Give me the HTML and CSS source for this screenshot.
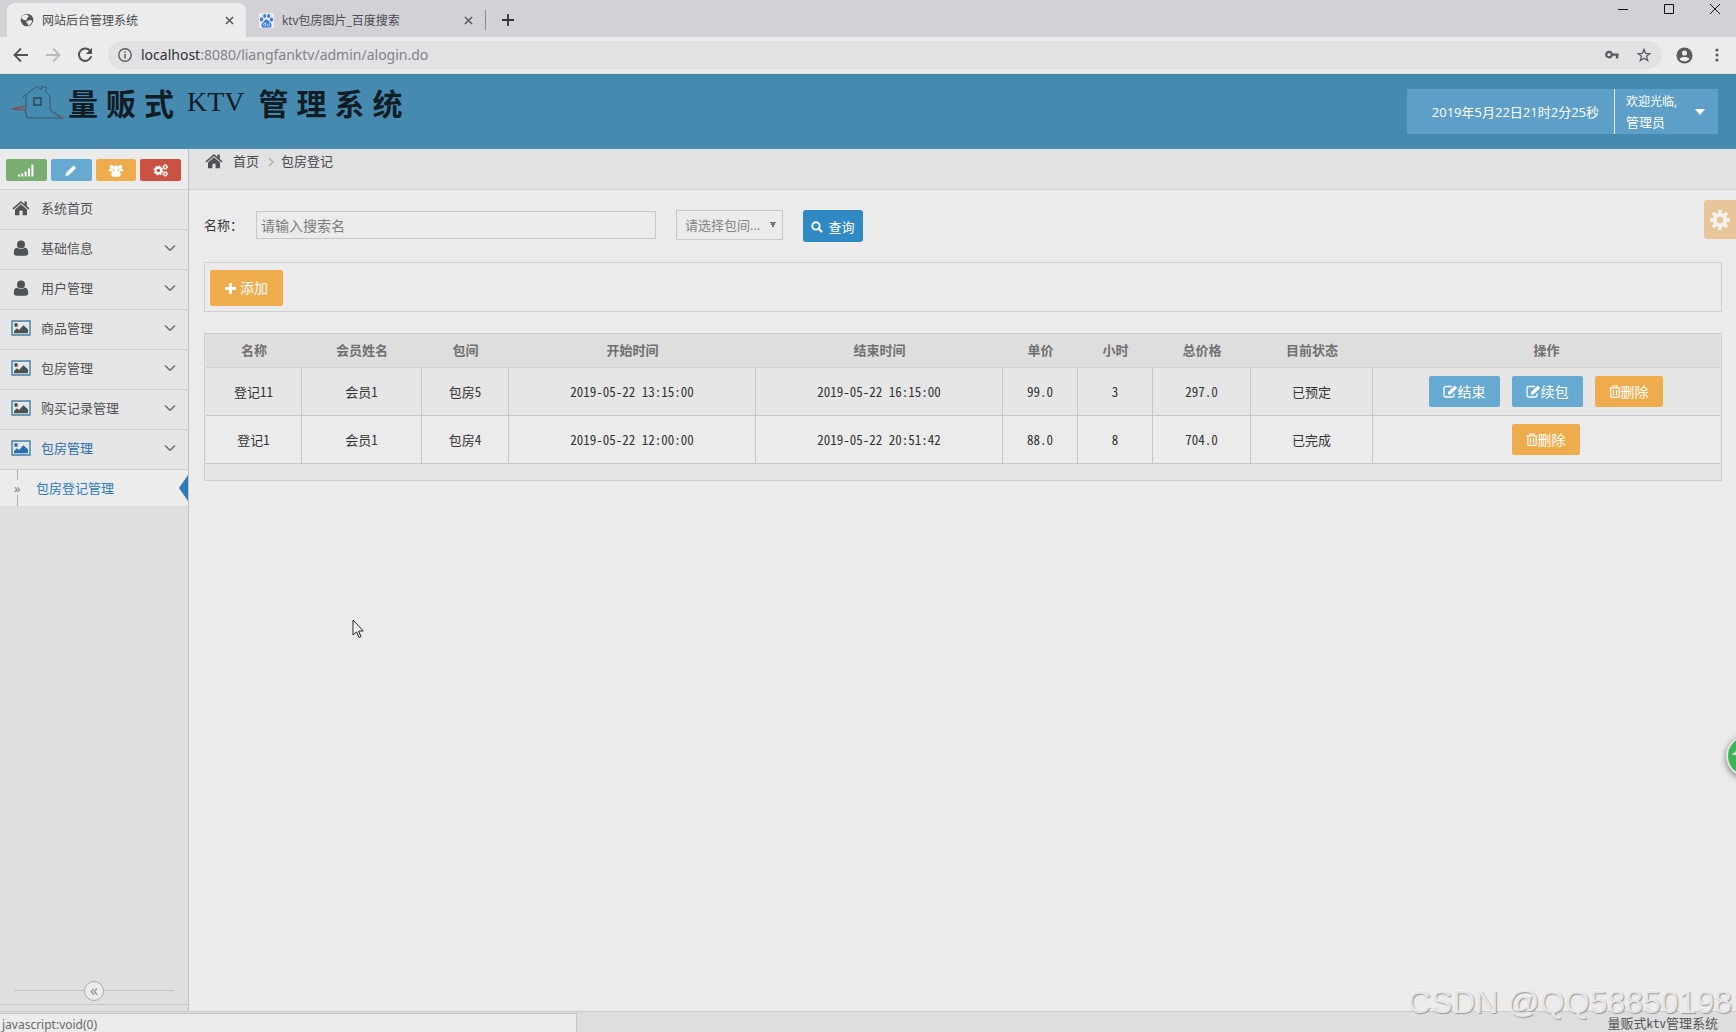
FILE: index.html
```html
<!DOCTYPE html>
<html lang="zh-CN">
<head>
<meta charset="utf-8">
<title>网站后台管理系统</title>
<link rel="stylesheet" href="styles.css">
</head>
<body>
<svg class="defs" aria-hidden="true">
  <symbol id="i-home" viewBox="0 0 18 16"><path d="M9 1 0.5 8.3 1.6 9.4 9 3.1 16.4 9.4 17.5 8.3 14.8 6V1.6H12.4V3.9Z"/><path d="M9 4.3 3 9.4V15.2H7.4V10.8H10.6V15.2H15V9.4Z"/></symbol>
  <symbol id="i-user" viewBox="0 0 16 16"><circle cx="8" cy="4.4" r="4"/><path d="M4.3 7.7C2 7.7 0.8 9.6 0.8 13 0.8 14.8 1.8 15.7 3.4 15.7H12.6C14.2 15.7 15.2 14.8 15.2 13 15.2 9.6 14 7.7 11.7 7.7 9.7 9.6 6.3 9.6 4.3 7.7Z"/></symbol>
  <symbol id="i-pic" viewBox="0 0 20 16"><path class="frame" d="M1 1H19V15H1Z" fill="none" stroke-width="1.4"/><circle cx="5" cy="5" r="1.9"/><path d="M3 13.2V11L6 8.3 8 10 12.5 5.2 17 9.6V13.2Z"/></symbol>
  <symbol id="i-down" viewBox="0 0 12 8"><path d="M1 1.5 6 6.2 11 1.5" fill="none" stroke="currentColor" stroke-width="1.5"/></symbol>
  <symbol id="i-edit" viewBox="0 0 15 13"><path d="M9 1.5H2.5Q1 1.5 1 3V10.5Q1 12 2.5 12H9.5Q11 12 11 10.5V8.5" fill="none" stroke="currentColor" stroke-width="1.3"/><path d="M5 9.6V7.2L11.8.6 14.2 3 7.4 9.6Z"/></symbol>
  <symbol id="i-trash" viewBox="0 0 12 13"><path d="M.5 3H11.5M4 3V1H8V3M1.8 3V11.2Q1.8 12.3 3 12.3H9Q10.2 12.3 10.2 11.2V3M4.5 5V10.5M7.5 5V10.5" fill="none" stroke="currentColor" stroke-width="1.2"/></symbol>
  <symbol id="i-gear" viewBox="0 0 20 20"><circle cx="10" cy="10" r="5.3" fill="none" stroke="currentColor" stroke-width="4"/><path d="M10 0V4M10 16V20M0 10H4M16 10H20M2.9 2.9 5.6 5.6M14.4 14.4 17.1 17.1M2.9 17.1 5.6 14.4M14.4 5.6 17.1 2.9" stroke="currentColor" stroke-width="3.6" fill="none"/></symbol>
  <symbol id="i-close" viewBox="0 0 10 10"><path d="M1 1 9 9M9 1 1 9" stroke="currentColor" stroke-width="1.6" fill="none"/></symbol>
</svg>

<div class="tabs">
  <div class="tab tab-on">
    <svg class="fav" viewBox="0 0 16 16"><circle cx="8" cy="8" r="7.2"/><path d="M7 1.6C8.5 1.8 10 2.6 10 4L8 6 7.5 8.5 4.5 8 1.3 6C2 3.4 4.2 1.6 7 1.6ZM8.8 8.8 12.5 8 14 9.2C13.3 12 11.5 13.8 9.5 14.3L8.3 11.5 6.5 10.5Z" fill="#ececec"/></svg>
    <span class="tab-title">网站后台管理系统</span>
    <button class="plain" aria-label="关闭"><svg class="x"><use href="#i-close"/></svg></button>
  </div>
  <div class="tab">
    <svg class="fav paw" viewBox="0 0 16 16"><rect width="16" height="16" fill="#e6ebf5"/><ellipse cx="2.7" cy="6.8" rx="1.7" ry="2.2"/><ellipse cx="6" cy="3.2" rx="1.6" ry="2.2"/><ellipse cx="10.2" cy="3.2" rx="1.6" ry="2.2"/><ellipse cx="13.3" cy="7" rx="1.7" ry="2.2"/><path d="M8 6.8C6.3 6.8 5.8 8.6 4.2 10 1.8 12 2.3 15.4 5 15.4 6.5 15.4 9.5 15.4 11 15.4 13.8 15.4 14.2 12 11.8 10 10.2 8.6 9.7 6.8 8 6.8Z"/><path d="M6.8 10V13.6H5.6Q4.6 13.4 4.6 12.4T5.6 11.2H6.8M8.6 11V13Q8.6 13.6 9.2 13.6H11V11" fill="none" stroke="#e6ebf5" stroke-width=".8"/></svg>
    <span class="tab-title">ktv包房图片_百度搜索</span>
    <button class="plain" aria-label="关闭"><svg class="x"><use href="#i-close"/></svg></button>
  </div>
  <button class="plain newtab" aria-label="新标签页"><svg viewBox="0 0 12 12"><path d="M6 0V12M0 6H12" stroke="#333" stroke-width="1.8"/></svg></button>
  <div class="winbtns">
    <button class="plain" aria-label="最小化"><svg viewBox="0 0 10 10"><path d="M0 5.5H10" stroke="#111"/></svg></button>
    <button class="plain" aria-label="最大化"><svg viewBox="0 0 10 10"><path d="M.5 .5H9.5V9.5H.5Z" stroke="#111" fill="none"/></svg></button>
    <button class="plain" aria-label="关闭窗口"><svg viewBox="0 0 10 10"><path d="M0 0 10 10M10 0 0 10" stroke="#111"/></svg></button>
  </div>
</div>

<div class="toolbar">
  <button class="plain" aria-label="后退"><svg class="nav" viewBox="0 0 16 16"><path d="M15 8H2M8 1.5 1.5 8 8 14.5" fill="none" stroke="#505256" stroke-width="1.8"/></svg></button>
  <button class="plain" aria-label="前进"><svg class="nav" viewBox="0 0 16 16"><path d="M1 8H14M8 1.5 14.5 8 8 14.5" fill="none" stroke="#b9babc" stroke-width="1.8"/></svg></button>
  <button class="plain" aria-label="刷新"><svg class="nav" viewBox="0 0 16 16"><path d="M13.5 4.5A6.2 6.2 0 1 0 14.2 9.2" fill="none" stroke="#505256" stroke-width="2"/><path d="M15 .8V7H8.8Z" fill="#505256"/></svg></button>
  <div class="address">
    <svg class="info" viewBox="0 0 14 14"><circle cx="7" cy="7" r="6.2" fill="none" stroke="#5c5e61" stroke-width="1.4"/><path d="M7 6V10.5M7 3.5V5" stroke="#5c5e61" stroke-width="1.5"/></svg>
    <span class="url"><b>localhost</b>:8080/liangfanktv/admin/alogin.do</span>
    <svg class="key" viewBox="0 0 14 10"><circle cx="4" cy="4.6" r="2.8" fill="none" stroke="#5a5c60" stroke-width="2.2"/><path d="M7 4.6H13.6M12 4.6V8.5" stroke="#5a5c60" stroke-width="2.4" fill="none"/></svg>
    <svg class="star" viewBox="0 0 14 14"><path d="M7 1.4 8.6 5.4 12.9 5.6 9.5 8.3 10.7 12.6 7 10.2 3.3 12.6 4.5 8.3 1.1 5.6 5.4 5.4Z" fill="none" stroke="#5a5c60" stroke-width="1.3"/></svg>
  </div>
  <svg class="acct" viewBox="0 0 18 18"><circle cx="9" cy="9" r="8.5" fill="#5a5c60"/><circle cx="9" cy="6.3" r="2.7" fill="#ececec"/><path d="M3.8 12.6C5.5 9.8 12.5 9.8 14.2 12.6 12 16 6 16 3.8 12.6Z" fill="#ececec"/></svg>
  <svg class="dots" viewBox="0 0 4 14"><circle cx="2" cy="2" r="1.6"/><circle cx="2" cy="7" r="1.6"/><circle cx="2" cy="12" r="1.6"/></svg>
</div>

<header class="banner">
  <h1 class="logo">
    <svg class="house" viewBox="0 0 52 38"><g fill="none"><path d="M11 14 25 3 29 7 30 3 35 5 33 8 39 14M14 12V26M38 13V27L50 35H15L13 27" stroke="#33566f" stroke-width="1"/><path d="M0 26 14 23M1 26 14 27M44 31 51 36" stroke="#7b4f55" stroke-width="1.3"/><path d="M22 15H29V22H22Z" stroke="#2a4658" stroke-width="1.4"/></g></svg>
    <span class="cn"><span>量</span><span>贩</span><span>式</span></span><span class="en">KTV</span><span class="cn"><span>管</span><span>理</span><span>系</span><span>统</span></span>
  </h1>
  <div class="userbox">
    <time class="clock">2019年5月22日21时2分25秒</time>
    <button class="plain who"><span><small>欢迎光临,</small><br>管理员</span><svg viewBox="0 0 10 6"><path d="M0 0H10L5 6Z" fill="#fff"/></svg></button>
  </div>
</header>

<div class="body">
  <aside class="side">
    <div class="shortcuts">
      <button class="plain green" aria-label="统计"><svg viewBox="0 0 16 12"><path d="M0 10H2V12H0ZM3.3 9H5.3V12H3.3ZM6.6 7H8.6V12H6.6ZM10 4H12V12H10ZM13.4 0H15.4V12H13.4Z"/></svg></button>
      <button class="plain blue" aria-label="编辑"><svg viewBox="0 0 14 14"><path d="M1 13 1.8 9.5 9.8 1.5 12.6 4.2 4.6 12.2Z"/></svg></button>
      <button class="plain amber" aria-label="用户"><svg viewBox="0 0 17 15"><circle cx="3.5" cy="3" r="2.2"/><circle cx="13.5" cy="3" r="2.2"/><circle cx="8.5" cy="5" r="3.2"/><path d="M0 8.5Q0 5.5 2 5.2H5V8.5ZM17 8.5Q17 5.5 15 5.2H12V8.5ZM3 12.5Q3 8 5.5 8H11.5Q14 8 14 12.5 14 14.6 12 14.6H5Q3 14.6 3 12.5Z"/></svg></button>
      <button class="plain red" aria-label="设置"><svg viewBox="0 0 17 15"><g fill="none" stroke="#fff"><circle cx="5.5" cy="7.5" r="3.3" stroke-width="2.4"/><circle cx="5.5" cy="7.5" r="5" stroke-width="1.4" stroke-dasharray="2 1.9"/><circle cx="13.4" cy="3.4" r="1.8" stroke-width="1.4"/><circle cx="13.4" cy="3.4" r="2.8" stroke-dasharray="1.2 1"/><circle cx="13.4" cy="11.4" r="1.8" stroke-width="1.4"/><circle cx="13.4" cy="11.4" r="2.8" stroke-dasharray="1.2 1"/></g></svg></button>
    </div>
    <nav class="menu">
      <a href="#"><svg class="ic"><use href="#i-home"/></svg><span>系统首页</span></a>
      <a href="#"><svg class="ic"><use href="#i-user"/></svg><span>基础信息</span><svg class="ar"><use href="#i-down"/></svg></a>
      <a href="#"><svg class="ic"><use href="#i-user"/></svg><span>用户管理</span><svg class="ar"><use href="#i-down"/></svg></a>
      <a href="#"><svg class="ic"><use href="#i-pic"/></svg><span>商品管理</span><svg class="ar"><use href="#i-down"/></svg></a>
      <a href="#"><svg class="ic"><use href="#i-pic"/></svg><span>包房管理</span><svg class="ar"><use href="#i-down"/></svg></a>
      <a href="#"><svg class="ic"><use href="#i-pic"/></svg><span>购买记录管理</span><svg class="ar"><use href="#i-down"/></svg></a>
      <a href="#" class="open"><svg class="ic"><use href="#i-pic"/></svg><span>包房管理</span><svg class="ar"><use href="#i-down"/></svg></a>
      <a href="#" class="sub"><span class="mark">»</span><span>包房登记管理</span></a>
    </nav>
    <div class="collapse"><button class="plain" aria-label="收起菜单">«</button></div>
  </aside>

  <main class="main">
    <nav class="crumbs">
      <svg class="home"><use href="#i-home"/></svg><a href="#">首页</a>
      <svg class="sep" viewBox="0 0 6 10"><path d="M1 1 5 5 1 9" fill="none" stroke="#b0b2b8" stroke-width="1.5"/></svg><span>包房登记</span>
    </nav>
    <div class="content">
      <form class="search">
        <label for="q">名称：</label>
        <input id="q" type="text" placeholder="请输入搜索名">
        <select aria-label="包间"><option>请选择包间...</option></select>
        <button type="button" class="plain query"><svg viewBox="0 0 13 13"><circle cx="5.4" cy="5.4" r="4" fill="none" stroke="#fff" stroke-width="2"/><path d="M8.3 8.3 12 12" stroke="#fff" stroke-width="2.4"/></svg>查询</button>
      </form>
      <div class="addbar"><button class="plain add"><svg viewBox="0 0 11 11"><path d="M5.5 0V11M0 5.5H11" stroke="#fff" stroke-width="3"/></svg>添加</button></div>
      <div class="panel">
        <table>
          <colgroup><col class="c1"><col class="c2"><col class="c3"><col class="c4"><col class="c5"><col class="c6"><col class="c7"><col class="c8"><col class="c9"><col></colgroup>
          <thead><tr><th>名称</th><th>会员姓名</th><th>包间</th><th>开始时间</th><th>结束时间</th><th>单价</th><th>小时</th><th>总价格</th><th>目前状态</th><th>操作</th></tr></thead>
          <tbody>
            <tr><td>登记11</td><td>会员1</td><td>包房5</td><td>2019-05-22 13:15:00</td><td>2019-05-22 16:15:00</td><td>99.0</td><td>3</td><td>297.0</td><td>已预定</td>
              <td><div class="ops"><button class="plain blue"><svg class="ed"><use href="#i-edit"/></svg>结束</button><button class="plain blue"><svg class="ed"><use href="#i-edit"/></svg>续包</button><button class="plain amber"><svg class="tr"><use href="#i-trash"/></svg>删除</button></div></td></tr>
            <tr><td>登记1</td><td>会员1</td><td>包房4</td><td>2019-05-22 12:00:00</td><td>2019-05-22 20:51:42</td><td>88.0</td><td>8</td><td>704.0</td><td>已完成</td>
              <td><div class="ops"><button class="plain amber"><svg class="tr"><use href="#i-trash"/></svg>删除</button></div></td></tr>
          </tbody>
        </table>
      </div>
    </div>
  </main>
</div>

<footer class="foot"><span>量贩式ktv管理系统</span></footer>

<div class="status">javascript:void(0)</div>
<button class="plain settings" aria-label="页面设置"><svg><use href="#i-gear"/></svg></button>
<div class="ball"><svg viewBox="0 0 12 12"><path d="M6 0 12 6H8V12H4V6H0Z" fill="#d9f7df"/></svg></div>
<div class="mark-csdn">CSDN @QQ58850198</div>
<svg class="cursor" viewBox="0 0 12 20"><path d="M1 1V16L4.5 12.8 7 18.5 9 17.6 6.6 12H11.3Z" fill="#f4f4f4" stroke="#222" stroke-width="1"/></svg>
</body>
</html>
```
FILE: styles.css
```css
* { box-sizing: border-box; }
body {
  margin: 0; min-height: 100vh; display: flex; flex-direction: column;
  background: #ebebeb; color: #393939; overflow: hidden; position: relative;
  font: 13px/20px "Open Sans", "Noto Sans CJK SC", sans-serif;
}
svg { display: block; flex: none; fill: currentColor; }
.defs { position: absolute; width: 0; height: 0; }
a { color: inherit; text-decoration: none; }
.plain { border: 0; padding: 0; margin: 0; background: none; color: inherit; font: inherit; display: flex; align-items: center; justify-content: center; }

/* browser chrome */
.tabs { height: 37px; background: #d1d1d6; display: flex; align-items: flex-end; padding-left: 7px; }
.tab { width: 239px; height: 34px; display: flex; align-items: center; padding: 0 12px 0 13px; color: #4a4b4f; font-size: 12px; }
.tab-on { background: #ececec; border-radius: 8px 8px 0 0; }
.fav { width: 14px; height: 14px; margin-right: 8px; color: #555; }
.paw { color: #3c78d8; width: 15px; height: 15px; }
.tab-title { flex: 1; padding-top: 2px; }
.x { width: 9px; height: 9px; color: #55565a; }
.newtab { height: 20px; border-left: 1px solid #8a8a90; margin-bottom: 7px; padding-left: 16px; }
.newtab svg { width: 12px; height: 12px; }
.winbtns { margin-left: auto; align-self: flex-start; display: flex; gap: 36px; padding: 4px 16px 0 0; }
.winbtns svg { width: 10px; height: 10px; }

.toolbar { height: 37px; background: #ececec; display: flex; align-items: center; padding: 0 17px 0 13px; gap: 16px; border-bottom: 1px solid #dedede; }
.nav { width: 16px; height: 16px; }
.address { flex: 1; height: 28px; border-radius: 14px; background: #e1e2e4; margin-left: -1px; padding: 0 11px 0 10px; display: flex; align-items: center; }
.info { width: 14px; height: 14px; }
.url { font: 14px/20px "Noto Sans", sans-serif; margin-left: 9px; flex: 1; color: #818386; }
.url b { font-weight: 400; color: #303134; }
.key { width: 14px; height: 10px; margin-right: 18px; }
.star { width: 14px; height: 14px; }
.acct { width: 17px; height: 17px; margin: 0 6px 0 -2px; }
.dots { width: 4px; height: 14px; color: #5a5c60; }

/* page header */
.banner { min-height: 75px; background: #478aaf; display: flex; justify-content: space-between; align-items: flex-start; padding: 0 18px 0 12px; }
.logo { margin: 0; padding-top: 6px; display: flex; align-items: center; color: #101c26; font-weight: 400; line-height: 44px; }
.house { width: 52px; height: 38px; margin-right: 4px; }
.cn { display: flex; gap: 8px; font: 700 30px/44px "Noto Sans CJK SC", sans-serif; }
.en { font: 28px/44px "Liberation Serif", serif; margin: 0 14px 0 13px; }
.userbox { display: flex; margin-top: 15px; background: #5e9fc7; color: #fff; height: 45px; }
.clock { width: 208px; display: flex; align-items: center; justify-content: flex-end; padding-right: 15px; border-right: 1px solid #e6eef4; }
.who { width: 103px; justify-content: space-between; padding: 0 13px 0 11px; line-height: 21px; text-align: left; }
.who small { font-size: 12px; }
.who svg { width: 10px; height: 6px; }

/* sidebar */
.body { flex: 1; display: flex; }
.side { width: 189px; background: #dfdfdf; border-right: 1px solid #bfbfbf; display: flex; flex-direction: column; }
.shortcuts { height: 41px; background: #ebebeb; border-bottom: 1px solid #cfcfcf; display: flex; gap: 4px; padding: 10px 7px 0 6px; }
.shortcuts .plain { flex: 1; height: 22px; border-radius: 2px; color: #fff; }
.shortcuts svg { width: 16px; height: 13px; }
.green { background: #7aae70; }
.blue { background: #66a9d1; }
.amber { background: #eeac4d; }
.red { background: #cb5240; }
.menu { display: flex; flex-direction: column; }
.menu a { height: 40px; display: flex; align-items: center; padding: 0 12px 3px 11px; background: #e6e6e6; border-bottom: 1px solid #cecece; color: #505356; }
.menu .ic { width: 20px; height: 16px; margin-right: 10px; }
.menu .ic + span { flex: 1; }
.frame { stroke: #3f82ad; }
.ar { width: 12px; height: 8px; color: #6c6f73; }
.menu .open, .menu .open .ic { color: #2b6fae; }
.menu .sub { height: 37px; background: #ececec; color: #2b7dbc; padding: 0 0 1px 14px; border-bottom-color: #dcdcdc; position: relative; }
.mark { width: 22px; color: #777; line-height: 34px; }
.sub::before { content: ""; position: absolute; left: 17px; top: 0; height: 100%; background: linear-gradient(#aaa 0 10px, transparent 10px 25px, #aaa 25px); width: 1px; }
.sub::after { content: ""; position: absolute; right: 0; top: 5px; border: solid transparent; border-width: 13px 9px 13px 0; border-right-color: #2f79b5; }
.collapse { margin-top: auto; height: 28px; border-bottom: 1px solid #c8c8c8; margin-bottom: 6px; padding: 0 14px; display: flex; align-items: center; }
.collapse::before, .collapse::after { content: ""; flex: 1; height: 1px; background: #c3c3c3; }
.collapse .plain { width: 20px; height: 20px; border: 1px solid #aaa; border-radius: 50%; background: #ececec; color: #888; font-size: 16px; line-height: 16px; padding-bottom: 2px; }

/* main area */
.main { flex: 1; min-width: 0; }
.crumbs { height: 41px; background: #e2e2e2; border-bottom: 1px solid #d5d5d5; display: flex; align-items: flex-start; padding: 2px 16px; color: #45474c; }
.home { width: 18px; height: 16px; margin: 2px 10px 0 0; color: #505055; }
.sep { width: 6px; height: 10px; margin: 6px 7px 0 9px; }
.content { padding: 20px 14px 0 15px; }
.search { display: flex; align-items: flex-start; }
.search label { width: 52px; line-height: 30px; }
.search input { width: 400px; height: 28px; margin-top: 1px; border: 1px solid #c8c8c8; background: #ebebeb; padding: 0 4px; font: inherit; font-size: 14px; border-radius: 0; }
.search input::placeholder { color: #7b7b7b; opacity: 1; }
.search select { width: 107px; height: 30px; margin: 0 20px; padding: 0 8px; border: 1px solid #c8c8c8; color: #858585; font: inherit; border-radius: 0; appearance: none; background: linear-gradient(to bottom right, #777 50%, transparent 50%) 96px 11px / 3px 6px no-repeat, linear-gradient(to bottom left, #777 50%, transparent 50%) 93px 11px / 3px 6px no-repeat, #ebebeb; }
.search .query { width: 60px; height: 32px; border-radius: 3px; background: #3089c2; color: #fff; gap: 5px; padding-top: 2px; }
.query svg { width: 12px; height: 12px; }
.addbar { margin-top: 20px; border: 1px solid #cfcfcf; height: 50px; padding: 7px 5px; }
.add { width: 73px; height: 36px; border-radius: 2px; background: #eeac4d; color: #fff; font-size: 14px; gap: 4px; }
.add svg { width: 11px; height: 11px; }
.panel { margin-top: 21px; border: 1px solid #cdcdcd; padding: 0 1px 16px; background: #e5e5e5; }
table { width: 100%; border-collapse: separate; border-spacing: 0; table-layout: fixed; text-align: center; }
th { height: 34px; padding: 0 0 2px; font-weight: 700; color: #707070; background: #dedede; border-bottom: 1px solid #cfcfcf; }
td { height: 48px; padding: 0; border-bottom: 1px solid #c6c6c6; border-right: 1px solid #c6c6c6; color: #333; font-family: "Noto Sans Mono CJK SC", "Noto Sans CJK SC", monospace; }
td:last-child { border-right: 0; }
tbody tr { background: #e6e6e6; }
tbody tr + tr { background: #ebebeb; }
.c1 { width: 96px; } .c2 { width: 120px; } .c3 { width: 87px; }
.c4, .c5 { width: 247px; }
.c6 { width: 75px; } .c7 { width: 75px; } .c8 { width: 98px; } .c9 { width: 122px; }
.ops { display: flex; justify-content: center; gap: 12px; padding-right: 2px; }
.ops .plain { height: 31px; padding: 0 14px; border-radius: 2px; color: #fff; font-family: "Open Sans", "Noto Sans CJK SC", sans-serif; font-size: 14px; }
.ed { width: 15px; height: 13px; }
.tr { width: 12px; height: 13px; }

.foot { height: 21px; background: #dedede; border-top: 1px solid #cbcbcb; text-align: right; padding-right: 18px; line-height: 22px; color: #555; font-family: "Noto Sans Mono CJK SC", "Noto Sans CJK SC", monospace; }

/* floating items */
.status { position: absolute; left: 0; bottom: 0; width: 577px; height: 19px; background: #ececec; border: solid #c4c4c4; border-width: 1px 1px 0 0; padding-left: 2px; font: 12px/21px "Noto Sans", sans-serif; color: #6a6a6a; }
.settings { position: absolute; right: 0; top: 200px; width: 32px; height: 39px; background: #e9c59b; border-radius: 3px 0 0 3px; color: #f4f2ea; }
.settings svg { width: 20px; height: 20px; }
.ball { position: absolute; right: -32px; top: 735px; width: 42px; height: 42px; border-radius: 50%; background: #3eb457; border: 2px solid #dfe5e0; box-shadow: 0 2px 6px #777; padding: 12px 4px; }
.ball svg { width: 12px; height: 12px; }
.mark-csdn { position: absolute; right: 4px; bottom: 10px; font: 32px/40px "Liberation Sans", sans-serif; color: #e6e6e6; text-shadow: 1px 1px 1px #999, -1px -1px 0 #f2f2f2; white-space: nowrap; }
.cursor { position: absolute; left: 352px; top: 619px; width: 12px; height: 20px; }
```
